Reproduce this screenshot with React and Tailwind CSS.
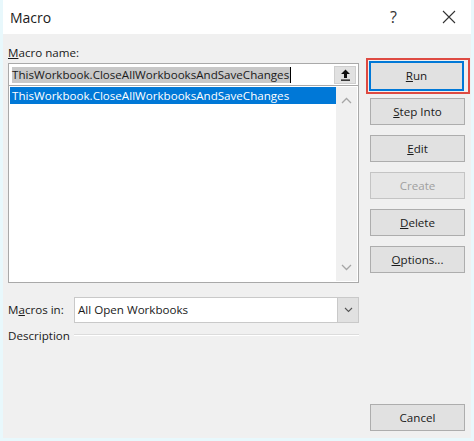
import React from "react";

const font = { fontFamily: '"Open Sans", "Noto Sans", sans-serif' };

const Btn = ({ children, disabled, primary }) => (
  <div
    className={`w-[95px] flex items-center justify-center text-[11.6px] bg-[#e1e1e1] ${
      primary ? "h-[30px] border-2 border-[#0078d7]" : "h-[27px] border border-[#adadad]"
    } ${disabled ? "text-[#a0a0a0] border-[#c4c4c4] bg-[#e6e6e6]" : "text-[#1a1a1a]"}`}
  >
    {children}
  </div>
);

const Chevron = ({ up }) => (
  <svg width="11" height="7" viewBox="0 0 11 7">
    <path
      d={up ? "M1 6 L5.5 1.5 L10 6" : "M1 1 L5.5 5.5 L10 1"}
      fill="none"
      stroke="#a6a6a6"
      strokeWidth="1.3"
    />
  </svg>
);

export default function App() {
  return (
    <div className="w-[474px] h-[441px] bg-[#e8f8fc] px-[3px] pb-[3px]" style={font}>
      <div className="w-full h-full flex flex-col bg-[#f0f0f0]">
        {/* Title bar */}
        <div className="h-[34px] bg-white flex items-center pl-[7px] pr-[15px] text-[#1a1a1a]">
          <span className="text-[14px]">Macro</span>
          <span className="ml-auto text-[16px] text-[#333] mr-[45px]">?</span>
          <svg width="14" height="14" viewBox="0 0 14 14">
            <path d="M1 1 L13 13 M13 1 L1 13" stroke="#333" strokeWidth="1.1" />
          </svg>
        </div>

        <div className="flex-1 flex pl-[5px] pr-[6px] pb-[7px]">
          {/* Left column */}
          <div className="w-[351px] flex flex-col">
            <div className="mt-[11px] text-[11.6px] leading-[16px] text-[#1a1a1a]">
              <u>M</u>acro name:
            </div>
            <div className="mt-[2px] h-[23px] bg-white border border-[#a9a9a9] flex items-center pl-[3px]">
              <span className="bg-[#c8c8c8] text-[11.6px] text-[#1a1a1a] leading-[16px] pr-[1px]">
                ThisWorkbook.CloseAllWorkbooksAndSaveChanges
              </span>
              <span className="w-px h-[16px] bg-black"></span>
              <div className="ml-auto mr-[2px] w-[22px] h-[18px] bg-[#e1e1e1] border border-[#cfcfcf] flex items-center justify-center">
                <svg width="11" height="12" viewBox="0 0 11 12">
                  <path d="M5.5 0.5 L10 5 L7 5 L7 9 L4 9 L4 5 L1 5 Z" fill="#111" />
                  <rect x="1" y="10.5" width="9" height="1.3" fill="#111" />
                </svg>
              </div>
            </div>
            <div className="h-[197px] bg-white border border-[#a9a9a9] border-t-0 flex">
              <div className="flex-1 pt-px pl-px">
                <div className="bg-[#0078d7] text-white text-[11.6px] leading-[17px] pl-[2px]">
                  ThisWorkbook.CloseAllWorkbooksAndSaveChanges
                </div>
              </div>
              <div className="w-[21px] bg-[#f0f0f0] flex flex-col items-center justify-between py-[10px] my-px mr-px">
                <Chevron up />
                <Chevron />
              </div>
            </div>

            <div className="flex items-center mt-[14px] h-[26px]">
              <span className="w-[66px] text-[11.6px] text-[#1a1a1a]">
                M<u>a</u>cros in:
              </span>
              <div className="flex-1 h-[26px] bg-white border border-[#c9c9c9] flex items-center">
                <span className="pl-[3px] text-[11.6px] text-[#1a1a1a]">All Open Workbooks</span>
                <div className="ml-auto w-[21px] h-full bg-[#e1e1e1] border-l border-[#c9c9c9] flex items-center justify-center">
                  <svg width="9" height="6" viewBox="0 0 9 6">
                    <path d="M1 1 L4.5 4.5 L8 1" fill="none" stroke="#555" strokeWidth="1.1" />
                  </svg>
                </div>
              </div>
            </div>

            <div className="flex items-center mt-[2px] h-[20px]">
              <span className="text-[11.6px] text-[#1a1a1a] mr-[4px] translate-y-[1px]">Description</span>
              <div className="flex-1 border-t border-[#dcdcdc] border-b border-b-white"></div>
            </div>
          </div>

          {/* Right column */}
          <div className="flex-1 flex flex-col items-end pt-[24px]">
            <div className="p-[1px] pr-[4px] border-2 border-[#de4a42] mr-[-5px]">
              <Btn primary>
                <span><u>R</u>un</span>
              </Btn>
            </div>
            <div className="flex flex-col gap-[10px] mt-[4px]">
              <Btn><span><u>S</u>tep Into</span></Btn>
              <Btn><span><u>E</u>dit</span></Btn>
              <Btn disabled>Create</Btn>
              <Btn><span><u>D</u>elete</span></Btn>
              <Btn><span><u>O</u>ptions...</span></Btn>
            </div>
            <div className="mt-auto">
              <Btn>Cancel</Btn>
            </div>
          </div>
        </div>
      </div>
    </div>
  );
}
